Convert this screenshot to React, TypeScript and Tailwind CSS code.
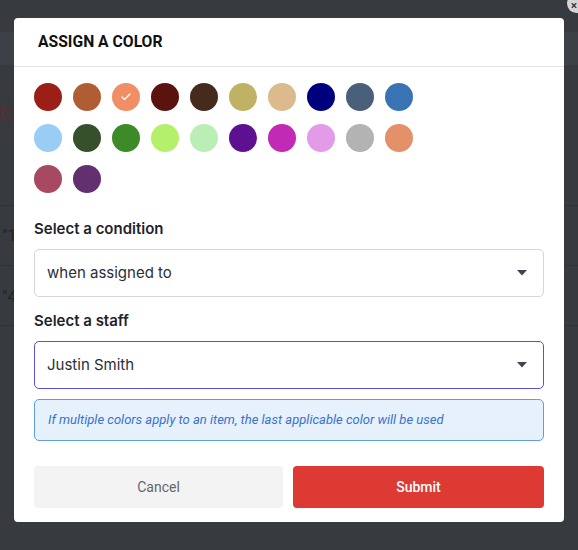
import { Check } from 'lucide-react'

const colors = [
    '#9b1f17', '#b15d33', '#f08e66', '#5a130e', '#452b1b', '#bfb265', '#dbbb8e', '#00007f', '#4a607a', '#3a73b3',
    '#9acdf6', '#35502a', '#3d8a28', '#b4f06a', '#bbeeb5', '#5d1190', '#c12ab5', '#e29be8', '#b3b3b3', '#e49068',
    '#a84962', '#62306e',
]

const selected = 2

function Caret() {
    return (
        <svg width="10" height="6" viewBox="0 0 10 6" className="shrink-0">
            <path d="M0 0 L10 0 L5 5.5 Z" fill="#3f4550" />
        </svg>
    )
}

export default function App() {
    return (
        <div className="relative w-[578px] h-[550px] overflow-hidden bg-[#373a3e] pt-[18px] pl-[14px]">
            {/* page behind the overlay */}
            <div className="absolute left-0 right-0 top-[32px] h-[33px] bg-[#3c4047]" />
            <div className="absolute left-[-1px] top-[100px] text-[20px] leading-[24px] text-[#5b2d33] font-['Roboto',sans-serif]">to</div>
            <div className="absolute left-0 right-0 top-[205px] h-px bg-[#2f3236]" />
            <div className="absolute left-[2px] top-[223px] text-[17px] text-[#222428] font-['Roboto',sans-serif]">"1</div>
            <div className="absolute left-0 right-0 top-[265px] h-px bg-[#2f3236]" />
            <div className="absolute left-[2px] top-[284px] text-[17px] text-[#222428] font-['Roboto',sans-serif]">"4</div>
            <div className="absolute left-0 right-0 top-[325px] h-px bg-[#2f3236]" />
            <div className="absolute right-[-8px] top-[-6px] w-[19px] h-[19px] rounded-full bg-[#d4d5d7] flex items-center justify-center">
                <span className="text-[#373a3e] text-[12px] leading-none font-bold mr-[5px] mt-[4px]">×</span>
            </div>

            <div className="relative w-[550px] h-[504px] bg-white rounded-[4px] flex flex-col">
                <div className="h-[49px] border-b border-[#e2e2e2] px-[24px] flex items-center">
                    <h2 className="text-[15.7px] font-bold text-[#111] font-['Roboto',sans-serif]">ASSIGN A COLOR</h2>
                </div>

                <div className="px-[20px] pt-[16px] pb-[14px] flex flex-col font-['Inter',sans-serif]">
                    <div className="grid grid-cols-[repeat(10,28px)] gap-x-[11px] gap-y-[13px]">
                        {colors.map((c, i) => (
                            <button
                                key={c + i}
                                className="w-[28px] h-[28px] rounded-full flex items-center justify-center"
                                style={{ backgroundColor: c }}
                            >
                                {i === selected && <Check className="w-[12px] h-[12px] text-white" strokeWidth={2.5} />}
                            </button>
                        ))}
                    </div>

                    <label className="mt-[26px] mb-[10px] h-[20px] text-[15px] leading-[20px] font-semibold text-[#1f232b]">Select a condition</label>
                    <div className="h-[48px] border border-[#d3d7de] rounded-[5px] px-[12px] flex items-center justify-between">
                        <span className="text-[15px] text-[#2b2f36]">when assigned to</span>
                        <span className="mr-[4px]"><Caret /></span>
                    </div>

                    <label className="mt-[14px] mb-[10px] h-[20px] text-[15px] leading-[20px] font-semibold text-[#1f232b]">Select a staff</label>
                    <div className="h-[48px] border border-[#5a4fdf] rounded-[5px] px-[12px] flex items-center justify-between">
                        <span className="text-[15px] text-[#2b2f36]">Justin Smith</span>
                        <span className="mr-[4px]"><Caret /></span>
                    </div>

                    <div className="mt-[10px] h-[42px] bg-[#e6f1fc] border border-[#5d9de8] rounded-[5px] px-[13px] flex items-center">
                        <p className="text-[13px] italic text-[#3a72cf] font-['Roboto',sans-serif]">If multiple colors apply to an item, the last applicable color will be used</p>
                    </div>

                    <div className="mt-[25px] flex gap-[10px] font-['Roboto',sans-serif]">
                        <button className="w-[249px] h-[42px] rounded-[4px] bg-[#f3f3f3] text-[14px] text-[#666]">Cancel</button>
                        <button className="flex-1 h-[42px] rounded-[4px] bg-[#dc3a33] text-[14px] font-medium text-white">Submit</button>
                    </div>
                </div>
            </div>
        </div>
    )
}
